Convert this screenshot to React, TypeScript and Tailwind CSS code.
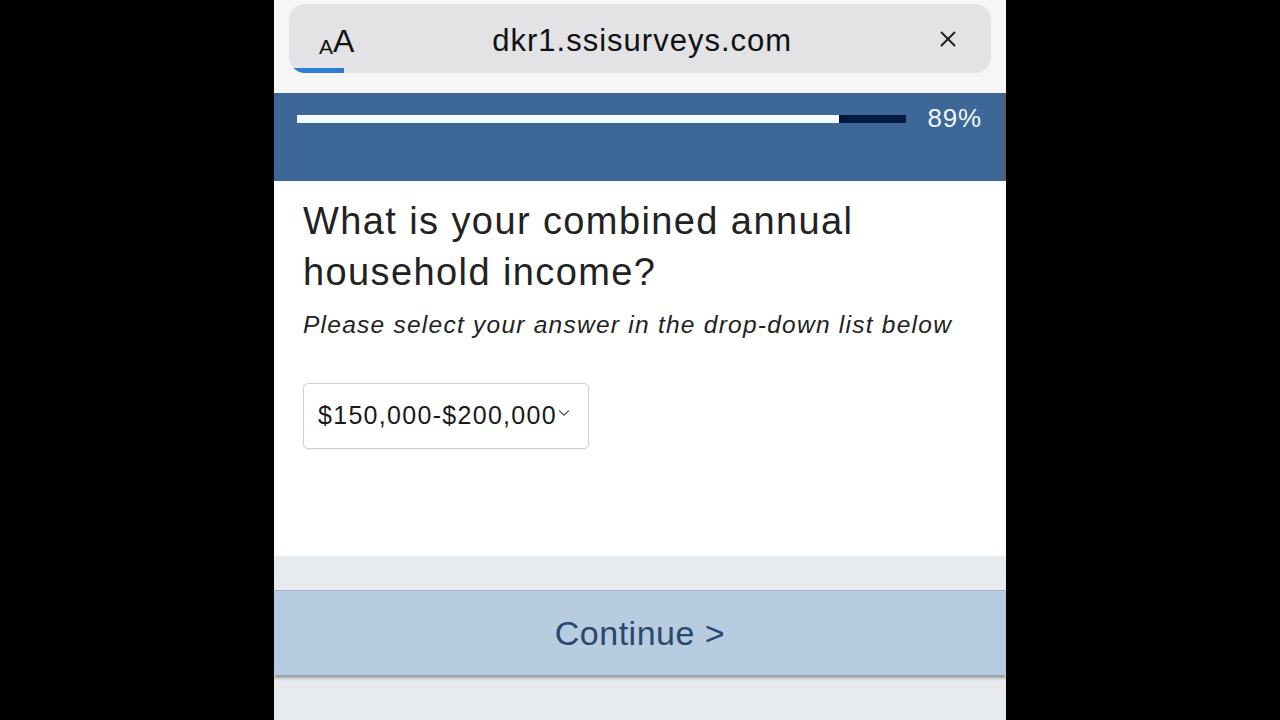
import { X, ChevronDown } from "lucide-react"

export default function App() {
  return (
    <div className="w-[1280px] h-[720px] bg-black flex justify-center overflow-hidden font-['Liberation_Sans',Arial,sans-serif]">
      <div className="w-[732px] h-full flex flex-col bg-white">
        {/* browser bar */}
        <div className="h-[93px] bg-[#f6f6f7] px-[15px] pt-[4px]">
          <div className="relative h-[69px] rounded-[16px] bg-[#e3e3e5] flex items-center px-[30px] overflow-hidden">
            <div className="text-[#111] flex items-end leading-none mt-[4px]">
              <span className="text-[21px]">A</span>
              <span className="text-[32px] tracking-[1px]">A</span>
            </div>
            <div className="flex-1 text-center text-[31px] text-[#111] tracking-[1px] mt-[5px] pr-[6px]">dkr1.ssisurveys.com</div>
            <X className="w-[26px] h-[26px] text-[#222]" strokeWidth={1.8} />
            <div className="absolute left-[5px] bottom-0 w-[50px] h-[5px] bg-[#2e7bd6] rounded-tr-[1px]" />
          </div>
        </div>

        {/* progress header */}
        <div className="h-[88px] bg-[#3d6796] flex items-start pt-[22px] pl-[23px] pr-[21px] border-r-[3px] border-[#5a5e66]">
          <div className="w-[609px] h-[8px] bg-[#001a40]">
            <div className="h-full bg-[#f2fbff]" style={{ width: "89%" }} />
          </div>
          <div className="ml-auto -mt-[10px] text-[26px] text-[#eef6ff] leading-none tracking-[0.8px]">89%</div>
        </div>

        {/* question */}
        <div className="h-[375px] bg-white px-[29px] pt-[15px]">
          <h1 className="text-[38px] leading-[51px] text-[#222] tracking-[1.4px]">What is your combined annual household income?</h1>
          <p className="mt-[9px] text-[24.5px] italic text-[#222] tracking-[1.25px]">Please select your answer in the drop-down list below</p>
          <div className="mt-[39px] w-[286px] h-[66px] border border-[#cfcfcf] rounded-[5px] flex items-center pl-[14px] pr-[10px] shadow-[0_1px_1px_rgba(0,0,0,0.05)]">
            <span className="text-[25px] text-[#1a1a1a] tracking-[1.3px]">$150,000-$200,000</span>
            <ChevronDown className="w-[18px] h-[18px] text-[#555] -mt-[6px] -ml-[2px]" strokeWidth={1.5} />
          </div>
        </div>

        {/* footer */}
        <div className="flex-1 bg-[#e8ebee] pt-[34px]">
          <div className="h-[85px] bg-[#b8cce1] border-t border-[#a3b3c4] shadow-[0_3px_3px_rgba(0,0,0,0.35)] flex items-center justify-center">
            <span className="text-[34px] text-[#29486c] tracking-[0.5px]">Continue &gt;</span>
          </div>
        </div>
      </div>
    </div>
  )
}
